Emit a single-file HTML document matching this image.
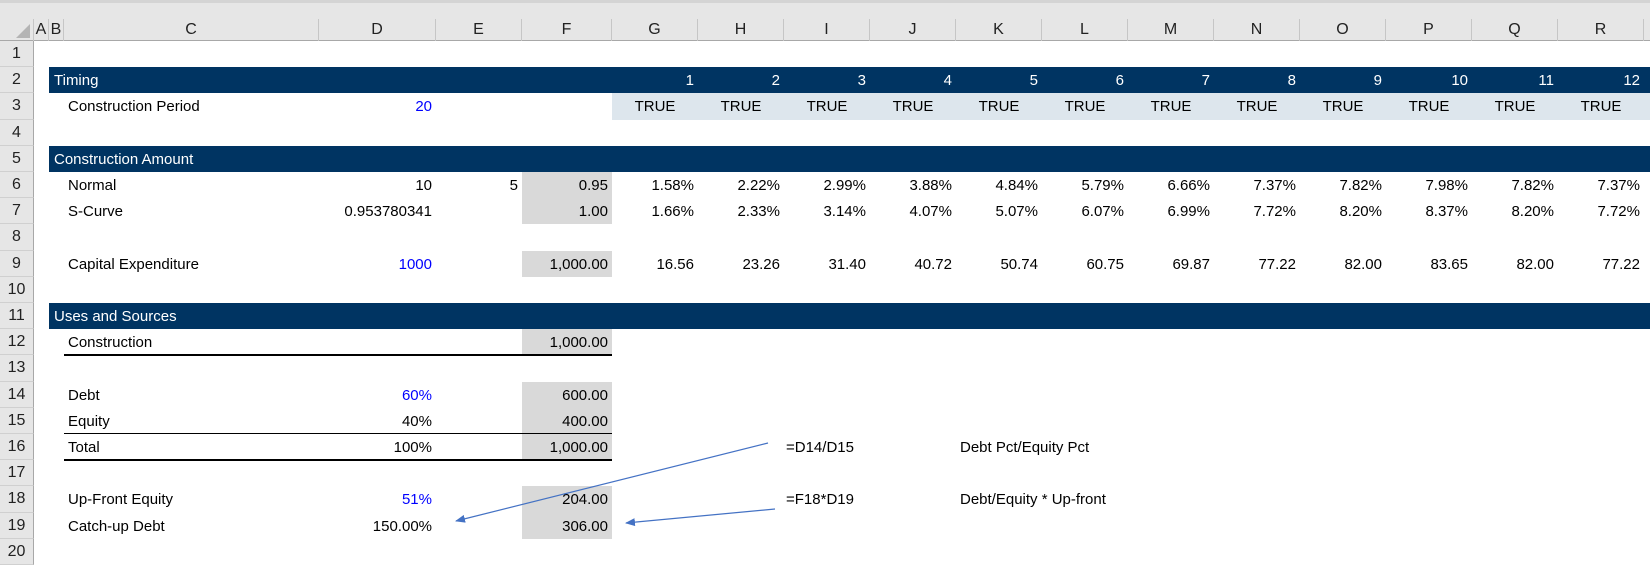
<!DOCTYPE html>
<html><head><meta charset="utf-8"><style>
*{margin:0;padding:0;box-sizing:border-box}
body{width:1650px;height:556px;overflow:hidden;background:#fff;font-family:"Liberation Sans",sans-serif;font-size:15px;color:#000;position:relative}
.a{position:absolute;white-space:nowrap}
.hd{position:absolute;top:0;left:0;width:1650px;height:41px;background:#e6e6e6;border-bottom:1px solid #a8a8a8}
.ch{position:absolute;top:19px;height:22px;line-height:22px;text-align:center;color:#222;border-right:1px solid #c6c6c6;font-size:16px}
.rh{position:absolute;left:0;width:34px;background:#e6e6e6;border-right:1px solid #a8a8a8;border-bottom:1px solid #d0d0d0;text-align:center;color:#222;height:26.2px;line-height:26px;font-size:16px}
.c{position:absolute;height:26.2px;line-height:27px;padding:0 4px}
.r{text-align:right}
.ctr{text-align:center}
.nav{position:absolute;left:49px;width:1601px;height:26.2px;background:#003462;color:#fff;line-height:27px}
.g{background:#d9d9d9}
.b{color:#0000ff}
</style></head><body>
<div class="hd"></div>
<div class="a" style="left:0;top:0;width:1650px;height:3px;background:#d4d4d4"></div>
<div class="a" style="left:0;top:19px;width:34px;height:22px;border-right:1px solid #c6c6c6"></div>
<svg class="a" style="left:14px;top:24px" width="16" height="14"><polygon points="16,0 16,14 2,14" fill="#b4b4b4"/></svg>
<div class="ch" style="left:34px;width:15px">A</div>
<div class="ch" style="left:49px;width:15px">B</div>
<div class="ch" style="left:64px;width:255px">C</div>
<div class="ch" style="left:319px;width:117px">D</div>
<div class="ch" style="left:436px;width:86px">E</div>
<div class="ch" style="left:522px;width:90px">F</div>
<div class="ch" style="left:612px;width:86px">G</div>
<div class="ch" style="left:698px;width:86px">H</div>
<div class="ch" style="left:784px;width:86px">I</div>
<div class="ch" style="left:870px;width:86px">J</div>
<div class="ch" style="left:956px;width:86px">K</div>
<div class="ch" style="left:1042px;width:86px">L</div>
<div class="ch" style="left:1128px;width:86px">M</div>
<div class="ch" style="left:1214px;width:86px">N</div>
<div class="ch" style="left:1300px;width:86px">O</div>
<div class="ch" style="left:1386px;width:86px">P</div>
<div class="ch" style="left:1472px;width:86px">Q</div>
<div class="ch" style="left:1558px;width:86px">R</div>

<div class="rh" style="top:41px">1</div>
<div class="rh" style="top:67.2px">2</div>
<div class="rh" style="top:93.4px">3</div>
<div class="rh" style="top:119.6px">4</div>
<div class="rh" style="top:145.8px">5</div>
<div class="rh" style="top:172px">6</div>
<div class="rh" style="top:198.2px">7</div>
<div class="rh" style="top:224.4px">8</div>
<div class="rh" style="top:250.6px">9</div>
<div class="rh" style="top:276.8px">10</div>
<div class="rh" style="top:303px">11</div>
<div class="rh" style="top:329.2px">12</div>
<div class="rh" style="top:355.4px">13</div>
<div class="rh" style="top:381.6px">14</div>
<div class="rh" style="top:407.8px">15</div>
<div class="rh" style="top:434px">16</div>
<div class="rh" style="top:460.2px">17</div>
<div class="rh" style="top:486.4px">18</div>
<div class="rh" style="top:512.6px">19</div>
<div class="rh" style="top:538.8px">20</div>

<div class="nav" style="top:67.2px"><span style="padding-left:5px">Timing</span></div>
<div class="c r" style="top:67.2px;left:612px;width:86px;color:#fff">1</div>
<div class="c r" style="top:67.2px;left:698px;width:86px;color:#fff">2</div>
<div class="c r" style="top:67.2px;left:784px;width:86px;color:#fff">3</div>
<div class="c r" style="top:67.2px;left:870px;width:86px;color:#fff">4</div>
<div class="c r" style="top:67.2px;left:956px;width:86px;color:#fff">5</div>
<div class="c r" style="top:67.2px;left:1042px;width:86px;color:#fff">6</div>
<div class="c r" style="top:67.2px;left:1128px;width:86px;color:#fff">7</div>
<div class="c r" style="top:67.2px;left:1214px;width:86px;color:#fff">8</div>
<div class="c r" style="top:67.2px;left:1300px;width:86px;color:#fff">9</div>
<div class="c r" style="top:67.2px;left:1386px;width:86px;color:#fff">10</div>
<div class="c r" style="top:67.2px;left:1472px;width:86px;color:#fff">11</div>
<div class="c r" style="top:67.2px;left:1558px;width:86px;color:#fff">12</div>
<div class="c" style="top:93.4px;left:64px;width:255px">Construction Period</div>
<div class="c r b" style="top:93.4px;left:319px;width:117px">20</div>
<div class="a" style="top:93.4px;left:612px;width:1038px;height:26.2px;background:#dde6ed"></div>
<div class="c ctr" style="top:93.4px;left:612px;width:86px">TRUE</div>
<div class="c ctr" style="top:93.4px;left:698px;width:86px">TRUE</div>
<div class="c ctr" style="top:93.4px;left:784px;width:86px">TRUE</div>
<div class="c ctr" style="top:93.4px;left:870px;width:86px">TRUE</div>
<div class="c ctr" style="top:93.4px;left:956px;width:86px">TRUE</div>
<div class="c ctr" style="top:93.4px;left:1042px;width:86px">TRUE</div>
<div class="c ctr" style="top:93.4px;left:1128px;width:86px">TRUE</div>
<div class="c ctr" style="top:93.4px;left:1214px;width:86px">TRUE</div>
<div class="c ctr" style="top:93.4px;left:1300px;width:86px">TRUE</div>
<div class="c ctr" style="top:93.4px;left:1386px;width:86px">TRUE</div>
<div class="c ctr" style="top:93.4px;left:1472px;width:86px">TRUE</div>
<div class="c ctr" style="top:93.4px;left:1558px;width:86px">TRUE</div>
<div class="nav" style="top:145.8px"><span style="padding-left:5px">Construction Amount</span></div>
<div class="c" style="top:172px;left:64px;width:255px">Normal</div>
<div class="c r" style="top:172px;left:319px;width:117px">10</div>
<div class="c r" style="top:172px;left:436px;width:86px">5</div>
<div class="c r g" style="top:172px;left:522px;width:90px">0.95</div>
<div class="c r" style="top:172px;left:612px;width:86px">1.58%</div>
<div class="c r" style="top:172px;left:698px;width:86px">2.22%</div>
<div class="c r" style="top:172px;left:784px;width:86px">2.99%</div>
<div class="c r" style="top:172px;left:870px;width:86px">3.88%</div>
<div class="c r" style="top:172px;left:956px;width:86px">4.84%</div>
<div class="c r" style="top:172px;left:1042px;width:86px">5.79%</div>
<div class="c r" style="top:172px;left:1128px;width:86px">6.66%</div>
<div class="c r" style="top:172px;left:1214px;width:86px">7.37%</div>
<div class="c r" style="top:172px;left:1300px;width:86px">7.82%</div>
<div class="c r" style="top:172px;left:1386px;width:86px">7.98%</div>
<div class="c r" style="top:172px;left:1472px;width:86px">7.82%</div>
<div class="c r" style="top:172px;left:1558px;width:86px">7.37%</div>
<div class="c" style="top:198.2px;left:64px;width:255px">S-Curve</div>
<div class="c r" style="top:198.2px;left:319px;width:117px">0.953780341</div>
<div class="c r g" style="top:198.2px;left:522px;width:90px">1.00</div>
<div class="c r" style="top:198.2px;left:612px;width:86px">1.66%</div>
<div class="c r" style="top:198.2px;left:698px;width:86px">2.33%</div>
<div class="c r" style="top:198.2px;left:784px;width:86px">3.14%</div>
<div class="c r" style="top:198.2px;left:870px;width:86px">4.07%</div>
<div class="c r" style="top:198.2px;left:956px;width:86px">5.07%</div>
<div class="c r" style="top:198.2px;left:1042px;width:86px">6.07%</div>
<div class="c r" style="top:198.2px;left:1128px;width:86px">6.99%</div>
<div class="c r" style="top:198.2px;left:1214px;width:86px">7.72%</div>
<div class="c r" style="top:198.2px;left:1300px;width:86px">8.20%</div>
<div class="c r" style="top:198.2px;left:1386px;width:86px">8.37%</div>
<div class="c r" style="top:198.2px;left:1472px;width:86px">8.20%</div>
<div class="c r" style="top:198.2px;left:1558px;width:86px">7.72%</div>
<div class="c" style="top:250.6px;left:64px;width:255px">Capital Expenditure</div>
<div class="c r b" style="top:250.6px;left:319px;width:117px">1000</div>
<div class="c r g" style="top:250.6px;left:522px;width:90px">1,000.00</div>
<div class="c r" style="top:250.6px;left:612px;width:86px">16.56</div>
<div class="c r" style="top:250.6px;left:698px;width:86px">23.26</div>
<div class="c r" style="top:250.6px;left:784px;width:86px">31.40</div>
<div class="c r" style="top:250.6px;left:870px;width:86px">40.72</div>
<div class="c r" style="top:250.6px;left:956px;width:86px">50.74</div>
<div class="c r" style="top:250.6px;left:1042px;width:86px">60.75</div>
<div class="c r" style="top:250.6px;left:1128px;width:86px">69.87</div>
<div class="c r" style="top:250.6px;left:1214px;width:86px">77.22</div>
<div class="c r" style="top:250.6px;left:1300px;width:86px">82.00</div>
<div class="c r" style="top:250.6px;left:1386px;width:86px">83.65</div>
<div class="c r" style="top:250.6px;left:1472px;width:86px">82.00</div>
<div class="c r" style="top:250.6px;left:1558px;width:86px">77.22</div>
<div class="nav" style="top:303px"><span style="padding-left:5px">Uses and Sources</span></div>
<div class="c" style="top:329.2px;left:64px;width:255px">Construction</div>
<div class="c r g" style="top:329.2px;left:522px;width:90px">1,000.00</div>
<div class="a" style="top:354px;left:64px;width:548px;height:2px;background:#000"></div>
<div class="c" style="top:381.6px;left:64px;width:255px">Debt</div>
<div class="c r b" style="top:381.6px;left:319px;width:117px">60%</div>
<div class="c r g" style="top:381.6px;left:522px;width:90px">600.00</div>
<div class="c" style="top:407.8px;left:64px;width:255px">Equity</div>
<div class="c r" style="top:407.8px;left:319px;width:117px">40%</div>
<div class="c r g" style="top:407.8px;left:522px;width:90px">400.00</div>
<div class="c" style="top:434px;left:64px;width:255px">Total</div>
<div class="c r" style="top:434px;left:319px;width:117px">100%</div>
<div class="c r g" style="top:434px;left:522px;width:90px">1,000.00</div>
<div class="a" style="top:433px;left:64px;width:548px;height:1px;background:#000"></div>
<div class="a" style="top:458.5px;left:64px;width:548px;height:2px;background:#000"></div>
<div class="c" style="top:434px;left:782px">=D14/D15</div>
<div class="c" style="top:434px;left:956px">Debt Pct/Equity Pct</div>
<div class="c" style="top:486.4px;left:64px;width:255px">Up-Front Equity</div>
<div class="c r b" style="top:486.4px;left:319px;width:117px">51%</div>
<div class="c r g" style="top:486.4px;left:522px;width:90px">204.00</div>
<div class="c" style="top:486.4px;left:782px">=F18*D19</div>
<div class="c" style="top:486.4px;left:956px">Debt/Equity * Up-front</div>
<div class="c" style="top:512.6px;left:64px;width:255px">Catch-up Debt</div>
<div class="c r" style="top:512.6px;left:319px;width:117px">150.00%</div>
<div class="c r g" style="top:512.6px;left:522px;width:90px">306.00</div>

<svg class="a" style="left:0;top:0" width="1650" height="556">
<defs><marker id="ah" markerWidth="10" markerHeight="8" refX="9" refY="4" orient="auto" markerUnits="userSpaceOnUse"><path d="M0,0 L10,4 L0,8 z" fill="#4472c4"/></marker></defs>
<line x1="768" y1="443" x2="456" y2="521" stroke="#4472c4" stroke-width="1.2" marker-end="url(#ah)"/>
<line x1="775" y1="509" x2="626" y2="523" stroke="#4472c4" stroke-width="1.2" marker-end="url(#ah)"/>
</svg>
</body></html>
